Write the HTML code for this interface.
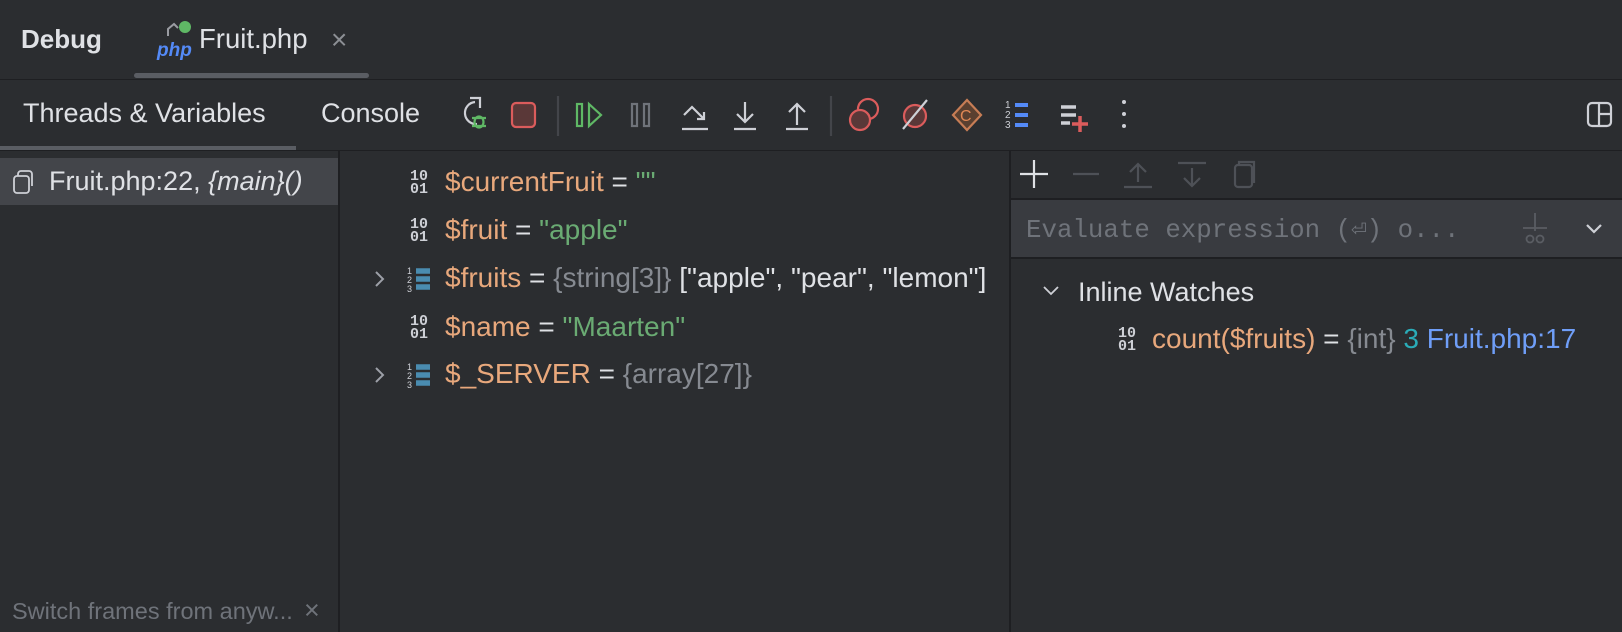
<!DOCTYPE html>
<html><head><meta charset="utf-8"><style>
*{margin:0;padding:0;box-sizing:border-box}
body{width:1622px;height:632px;background:#2b2d30;font-family:"Liberation Sans",sans-serif;color:#dfe1e5;position:relative;overflow:hidden}
.a{position:absolute;white-space:nowrap}
.v{font-size:28px;line-height:34px}
.o{color:#e8a87c}.g{color:#6aab73}.gr{color:#868a91}.w{color:#dfe1e5}.t{color:#2aacb8}.b{color:#6f9ef8}
.bits{position:absolute;font-size:15px;line-height:13px;font-weight:bold;color:#ced0d6;font-family:"Liberation Mono",monospace}
svg{position:absolute;overflow:visible}
</style></head><body>
<!-- top bar -->
<div class="a" style="left:21px;top:24px;font-size:26px;font-weight:bold;color:#dfe1e5">Debug</div>
<div class="a" style="left:157px;top:40px;font-size:19px;font-style:italic;font-weight:bold;color:#548af7">php</div>
<svg style="left:166px;top:20px" width="30" height="22"><path d="M2 16 V9 L8 4 L12 8" stroke="#9a9ca2" stroke-width="2" fill="none"/><circle cx="19" cy="7" r="6" fill="#5fb865"/></svg>
<div class="a" style="left:199px;top:23px;font-size:27.5px">Fruit.php</div>
<div class="a" style="left:331px;top:24px;font-size:28px;color:#8c8f94">×</div>
<div class="a" style="left:134px;top:73px;width:235px;height:5px;border-radius:3px;background:#5a5d63"></div>
<div class="a" style="left:0;top:79px;width:1622px;height:1px;background:#1e1f22"></div>
<!-- toolbar -->
<div class="a" style="left:23px;top:98px;font-size:27px">Threads &amp; Variables</div>
<div class="a" style="left:0;top:146px;width:296px;height:4px;background:#5a5d63"></div>
<div class="a" style="left:321px;top:98px;font-size:27px">Console</div>
<svg style="left:0;top:80px" width="1622" height="70" fill="none" stroke-width="2.2">
<path d="M475 22 A11 11 0 1 0 477 44" stroke="#ced0d6"/><path d="M470 18 L480 18 L480 28" stroke="#ced0d6"/><ellipse cx="479" cy="42" rx="4.5" ry="5.5" stroke="#5fb865"/><path d="M472 38h14M472 46h14" stroke="#5fb865"/>
<rect x="512" y="23" width="23" height="24" rx="4" fill="#5a3838" stroke="#db5c5c"/>
<path d="M558 16v40" stroke="#43454a"/>
<rect x="577" y="24" width="5" height="22" stroke="#5fb865"/><path d="M589 24 L601 35 L589 46 Z" stroke="#5fb865"/>
<rect x="632" y="24" width="5" height="22" stroke="#6f737a"/><rect x="644" y="24" width="5" height="22" stroke="#6f737a"/>
<path d="M684 35 L692 27 L704 39 M704 32 V39 H697 M682 49 H708" stroke="#ced0d6"/>
<path d="M745 22 V42 M737 34 L745 42 L753 34 M734 49 H756" stroke="#ced0d6"/>
<path d="M797 24 V45 M789 32 L797 24 L805 32 M786 49 H808" stroke="#ced0d6"/>
<path d="M831 16v40" stroke="#43454a"/>
<circle cx="868" cy="29" r="10" stroke="#db5c5c"/><circle cx="860" cy="40" r="10" fill="#5a3838" stroke="#db5c5c"/>
<circle cx="915" cy="36" r="11" fill="#5a3838" stroke="#db5c5c"/><path d="M903 49 L927 20" stroke="#ced0d6"/>
<path d="M967 20 L981 35 L967 50 L953 35 Z" fill="#5a4030" stroke="#c77d55"/><text x="960" y="41" font-size="16" fill="#e08855" stroke="none" font-family="Liberation Sans">C</text>
<text x="1005" y="28" font-size="10" fill="#ced0d6" stroke="none">1</text><text x="1005" y="38" font-size="10" fill="#ced0d6" stroke="none">2</text><text x="1005" y="48" font-size="10" fill="#ced0d6" stroke="none">3</text>
<path d="M1015 25h13M1015 35h13M1015 45h13" stroke="#548af7" stroke-width="4"/>
<path d="M1061 27h15M1061 35h15M1061 43h9" stroke="#ced0d6" stroke-width="3.5"/><path d="M1080 36v16M1072 44h16" stroke="#db5c5c" stroke-width="3.5"/>
<circle cx="1124" cy="22" r="2" fill="#ced0d6" stroke="none"/><circle cx="1124" cy="34" r="2" fill="#ced0d6" stroke="none"/><circle cx="1124" cy="46" r="2" fill="#ced0d6" stroke="none"/>
</svg>
<svg style="left:1587px;top:102px" width="26" height="26" fill="none" stroke="#ced0d6" stroke-width="2.2"><rect x="1" y="1" width="23" height="23" rx="4"/><path d="M12 1v23M12 12h12"/></svg>
<div class="a" style="left:0;top:150px;width:1622px;height:1px;background:#1e1f22"></div>
<!-- left panel -->
<div class="a" style="left:0;top:158px;width:338px;height:47px;background:#43454a"></div>
<svg style="left:13px;top:170px" width="26" height="26" fill="none" stroke="#ced0d6" stroke-width="1.8"><rect x="1" y="6" width="15" height="17" rx="3"/><path d="M5 6 V4 a3 3 0 0 1 3 -3 H16 a3 3 0 0 1 3 3 V16"/></svg>
<div class="a" style="left:49px;top:166px;font-size:27px">Fruit.php:22, <i>{main}()</i></div>
<div class="a" style="left:12px;top:598px;font-size:23.5px;color:#6f737a">Switch frames from anyw...</div>
<div class="a" style="left:304px;top:595px;font-size:27px;color:#6f737a">×</div>
<div class="a" style="left:338px;top:151px;width:2px;height:481px;background:#1e1f22"></div>
<!-- middle -->
<div class="bits" style="left:410px;top:170px">10<br>01</div>
<div class="a v" style="left:445px;top:165px"><span class="o">$currentFruit</span> = <span class="g">""</span></div>
<div class="bits" style="left:410px;top:218px">10<br>01</div>
<div class="a v" style="left:445px;top:213px"><span class="o">$fruit</span> = <span class="g">"apple"</span></div>
<svg style="left:373px;top:270px" width="14" height="18" fill="none" stroke="#9da0a8" stroke-width="2"><path d="M3 2l7 7-7 7"/></svg>
<svg style="left:407px;top:265px" width="30" height="28"><text x="0" y="9" font-size="9" fill="#ced0d6">1</text><text x="0" y="18" font-size="9" fill="#ced0d6">2</text><text x="0" y="27" font-size="9" fill="#ced0d6">3</text><path d="M9 6h14M9 14h14M9 22h14" stroke="#4a8cb0" stroke-width="5.5"/></svg>
<div class="a v" style="left:445px;top:261px"><span class="o">$fruits</span> = <span class="gr">{string[3]}</span> ["apple", "pear", "lemon"]</div>
<div class="bits" style="left:410px;top:315px">10<br>01</div>
<div class="a v" style="left:445px;top:310px"><span class="o">$name</span> = <span class="g">"Maarten"</span></div>
<svg style="left:373px;top:366px" width="14" height="18" fill="none" stroke="#9da0a8" stroke-width="2"><path d="M3 2l7 7-7 7"/></svg>
<svg style="left:407px;top:361px" width="30" height="28"><text x="0" y="9" font-size="9" fill="#ced0d6">1</text><text x="0" y="18" font-size="9" fill="#ced0d6">2</text><text x="0" y="27" font-size="9" fill="#ced0d6">3</text><path d="M9 6h14M9 14h14M9 22h14" stroke="#4a8cb0" stroke-width="5.5"/></svg>
<div class="a v" style="left:445px;top:357px"><span class="o">$_SERVER</span> = <span class="gr">{array[27]}</span></div>
<div class="a" style="left:1009px;top:151px;width:2px;height:481px;background:#1e1f22"></div>
<!-- right -->
<svg style="left:1018px;top:158px" width="260" height="34" fill="none" stroke-width="2.2">
<path d="M16 2v28M2 16h28" stroke="#dfe1e5"/><path d="M55 16h26" stroke="#4e5157"/>
<path d="M120 6v18M112 14l8-8 8 8M106 29h28" stroke="#4e5157"/><path d="M174 10v18M166 20l8 8 8-8M160 5h28" stroke="#4e5157"/>
<rect x="217" y="7" width="17" height="22" rx="3" stroke="#4e5157"/><path d="M221 7V4h15v21" stroke="#4e5157"/>
</svg>
<div class="a" style="left:1011px;top:198px;width:611px;height:2px;background:#1e1f22"></div>
<div class="a" style="left:1011px;top:200px;width:611px;height:57px;background:#393b40"></div>
<div class="a" style="left:1026px;top:214px;font-family:'Liberation Mono',monospace;font-size:25.8px;color:#6f737a">Evaluate expression (⏎) o...</div>
<svg style="left:1520px;top:212px" width="30" height="34" fill="none" stroke="#5a5d63" stroke-width="1.8"><path d="M15 1v18M3 16h24"/><circle cx="10" cy="27" r="3.5"/><circle cx="20" cy="27" r="3.5"/></svg>
<svg style="left:1585px;top:222px" width="18" height="14" fill="none" stroke="#ced0d6" stroke-width="2.2"><path d="M2 3l7 7 7-7"/></svg>
<div class="a" style="left:1011px;top:257px;width:611px;height:2px;background:#1e1f22"></div>
<svg style="left:1042px;top:284px" width="18" height="14" fill="none" stroke="#ced0d6" stroke-width="1.8"><path d="M2 3l7 7 7-7"/></svg>
<div class="a" style="left:1078px;top:275px;font-size:27px;line-height:34px">Inline Watches</div>
<div class="bits" style="left:1118px;top:327px">10<br>01</div>
<div class="a v" style="left:1152px;top:322px"><span class="o">count($fruits)</span> = <span class="gr">{int}</span> <span class="t">3</span> <span class="b">Fruit.php:17</span></div>
</body></html>
